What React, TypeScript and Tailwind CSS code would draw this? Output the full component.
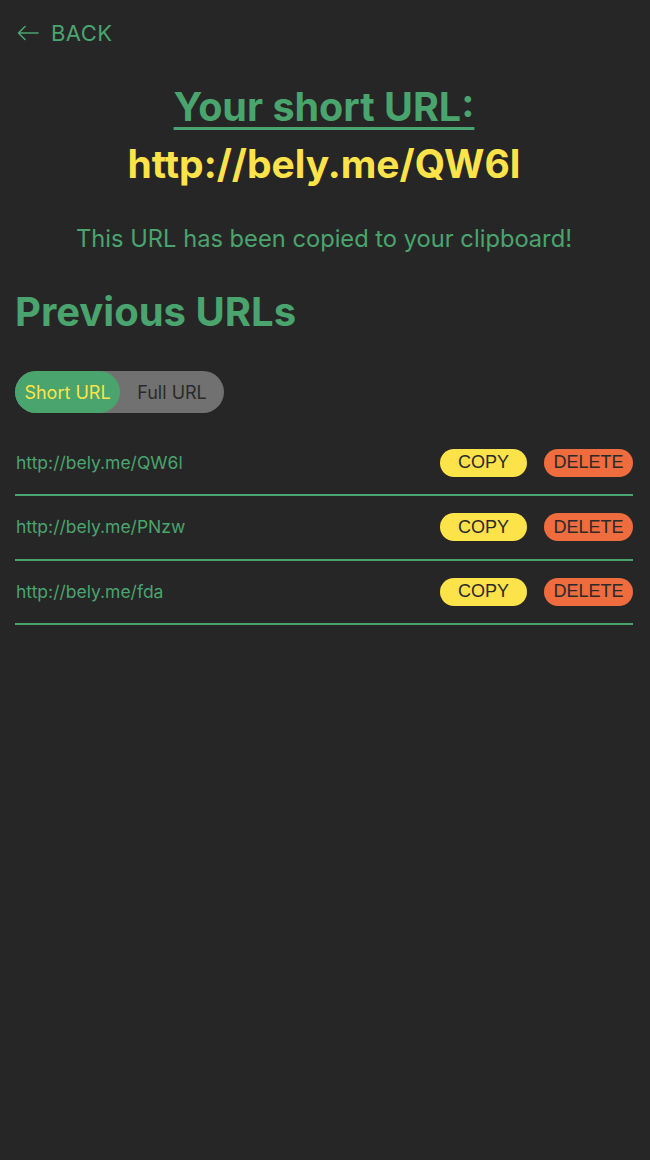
import { useState } from 'react';

const urls = ['http://bely.me/QW6l', 'http://bely.me/PNzw', 'http://bely.me/fda'];

function BackArrow() {
  return (
    <svg width="22" height="16" viewBox="0 0 22 16" fill="none" stroke="currentColor" strokeWidth="1.6" strokeLinecap="round" strokeLinejoin="round">
      <path d="M21 8H2M8 1.5L1.5 8L8 14.5" />
    </svg>
  );
}

export default function App() {
  const [mode, setMode] = useState<'short' | 'full'>('short');
  return (
    <div className="min-h-[1160px] w-full bg-[#262626] font-['Inter','Noto_Sans',sans-serif] text-[#4aa46e]">
      <div className="pl-[15px] pr-[17px] pt-[20px]">
        <button className="flex items-center gap-[12px] text-[22px] leading-[26px] tracking-[0.02em] text-[#4aa46e]">
          <span className="ml-[2px]"><BackArrow /></span>
          <span>BACK</span>
        </button>

        <div className="mt-[37px] flex flex-col items-center">
          <h1 className="text-[39.5px] font-bold leading-[48px] underline decoration-[3px] underline-offset-[6px]">Your short URL:</h1>
          <p className="mt-[10px] text-[39px] font-bold leading-[46px] text-[#fde34a]">http://bely.me/QW6l</p>
          <p className="mt-[38px] text-[23.7px] leading-[28px]">This URL has been copied to your clipboard!</p>
        </div>

        <h2 className="mt-[35px] text-[40px] font-bold leading-[48px]">Previous URLs</h2>

        <div className="mt-[35px] flex h-[42px] w-[209px] rounded-full bg-[#717171] text-[18px]">
          <button
            onClick={() => setMode('short')}
            className={`flex w-[105px] items-center justify-center rounded-full ${mode === 'short' ? 'bg-[#4aa46e] text-[#fde34a]' : 'text-[#2a2a2a]'}`}
          >
            Short URL
          </button>
          <button
            onClick={() => setMode('full')}
            className={`flex flex-1 items-center justify-center rounded-full ${mode === 'full' ? 'bg-[#4aa46e] text-[#fde34a]' : 'text-[#2a2a2a]'}`}
          >
            Full URL
          </button>
        </div>

        <ul className="mt-[18.5px]">
          {urls.map((u) => (
            <li key={u} className="flex flex-col">
              <div className="flex items-center py-[17.25px]">
                <span className="ml-[1px] flex-1 text-[17.5px] text-[#4aa46e]">{u}</span>
                <div className="flex items-center gap-[17px] font-['Liberation_Sans',Arial,sans-serif] text-[18px] text-[#2a2a2a]">
                  <button className="h-[28px] w-[87px] rounded-full bg-[#fde34a]">COPY</button>
                  <button className="h-[28px] w-[89px] rounded-full bg-[#ef6c3e]">DELETE</button>
                </div>
              </div>
              <div className="h-[2px] bg-[#4aa46e]" />
            </li>
          ))}
        </ul>
      </div>
    </div>
  );
}
